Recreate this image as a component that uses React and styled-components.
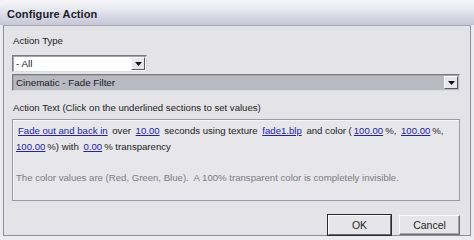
import React from "react";
import styled, { createGlobalStyle } from "styled-components";

const Global = createGlobalStyle`
  html, body { margin: 0; padding: 0; background: #ecebf0; }
  body { font-family: "Liberation Sans", Arial, sans-serif; }
`;

const Window = styled.div`
  width: 474px;
  height: 236px;
  display: flex;
  flex-direction: column;
  background: #ecebf1;
  box-sizing: border-box;
  padding: 0 3px 2px 3px;
  overflow: hidden;
`;

const TitleBar = styled.div`
  height: 25px;
  margin: 0 -3px;
  flex-shrink: 0;
  display: flex;
  align-items: center;
  padding-left: 7px;
  padding-top: 2px;
  box-sizing: border-box;
  background: linear-gradient(#f6f6fa 0%, #e6e6ee 40%, #c6c6d8 100%);
  border-top-left-radius: 3px;
  font-weight: bold;
  font-size: 11px;
  color: #1c1c2c;
  letter-spacing: 0.1px;
`;

const Body = styled.div`
  flex: 1;
  display: flex;
  flex-direction: column;
  background: #e3e3e8;
  border: 1px solid #8e8e98;
  border-top-color: #a8a8b2;
  padding: 9px 10px 0 8px;
  font-size: 9.6px;
  color: #1e1e22;
`;

const Label = styled.div`
  height: 12px;
  line-height: 12px;
  margin: ${(p) => p.$mt || 0}px 0 ${(p) => p.$mb || 0}px 1px;
`;

const Select = styled.div`
  display: flex;
  align-items: center;
  width: ${(p) => p.$w};
  height: 17px;
  box-sizing: border-box;
  margin-bottom: ${(p) => p.$mb || 0}px;
  background: ${(p) => (p.$gray ? "#b9b9c2" : "#ffffff")};
  border: 1px solid #7a7a82;
  border-right-color: #dcdce2;
  border-bottom-color: #dcdce2;
  box-shadow: inset 1px 1px 0 #a4a4ac;
  padding-left: 3px;
`;

const SelectText = styled.span`
  flex: 1;
  font-size: 9.8px;
  color: #18181c;
`;

const ArrowButton = styled.div`
  width: 14px;
  height: 13px;
  margin-right: 1px;
  display: flex;
  align-items: center;
  justify-content: center;
  box-sizing: border-box;
  background: #e8e8ec;
  border: 1px solid #fafafc;
  border-right-color: #5a5a62;
  border-bottom-color: #5a5a62;
`;

const Arrow = () => (
  <svg width="7" height="4" viewBox="0 0 7 4">
    <polygon points="0,0 7,0 3.5,4" fill="#111" />
  </svg>
);

const TextBox = styled.div`
  width: 448px;
  height: 82px;
  box-sizing: border-box;
  background: #e6e6eb;
  border: 1px solid #9a9aa4;
  box-shadow: inset 1px 1px 0 #f6f6f8;
  padding: 3px 3px;
  font-size: 9.6px;
  line-height: 16px;
  color: #1e1e22;
  white-space: nowrap;
`;

const Link = styled.span`
  color: #2323a8;
  text-decoration: underline;
  text-underline-offset: 1px;
  margin: 0 2px;
`;

const Note = styled.div`
  margin-top: 15px;
  color: #7c7c84;
`;

const Footer = styled.div`
  display: flex;
  justify-content: flex-end;
  gap: 8px;
  margin-top: 14px;
`;

const Button = styled.div`
  width: ${(p) => p.$w}px;
  height: 20px;
  box-sizing: border-box;
  display: flex;
  align-items: center;
  justify-content: center;
  background: #e6e6ea;
  font-size: 10.5px;
  color: #1e1e22;
  border: 1px solid #fbfbfd;
  border-right-color: #6a6a72;
  border-bottom-color: #6a6a72;
  box-shadow: ${(p) => (p.$default ? "0 0 0 1px #2a2a30" : "inset -1px -1px 0 #a8a8b0")};
`;

export default function App() {
  return (
    <>
      <Global />
      <Window>
        <TitleBar>Configure Action</TitleBar>
        <Body>
          <Label $mb={8}>Action Type</Label>
          <Select $w="135px" $mb={2}>
            <SelectText>- All</SelectText>
            <ArrowButton><Arrow /></ArrowButton>
          </Select>
          <Select $w="448px" $gray>
            <SelectText>Cinematic - Fade Filter</SelectText>
            <ArrowButton><Arrow /></ArrowButton>
          </Select>
          <Label $mt={11} $mb={5}>Action Text (Click on the underlined sections to set values)</Label>
          <TextBox>
            <Link>Fade out and back in</Link> over <Link>10.00</Link> seconds using texture{" "}
            <Link>fade1.blp</Link> and color (<Link>100.00</Link>%, <Link>100.00</Link>%,
            <br />
            <Link style={{ marginLeft: 0 }}>100.00</Link>%) with <Link>0.00</Link>% transparency
            <Note>The color values are (Red, Green, Blue).&nbsp; A 100% transparent color is completely invisible.</Note>
          </TextBox>
          <Footer>
            <Button $w={63} $default>OK</Button>
            <Button $w={61}>Cancel</Button>
          </Footer>
        </Body>
      </Window>
    </>
  );
}
